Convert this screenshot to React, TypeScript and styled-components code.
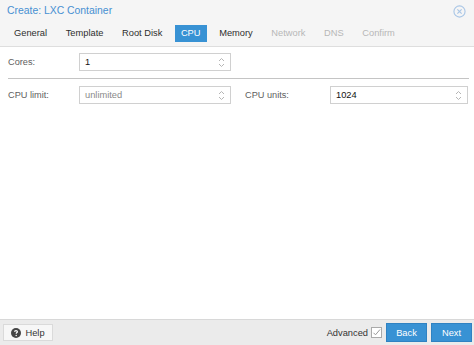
import React from 'react'
import styled, { createGlobalStyle } from 'styled-components'

const tabs = [
  { label: 'General', state: 'normal' },
  { label: 'Template', state: 'normal' },
  { label: 'Root Disk', state: 'normal' },
  { label: 'CPU', state: 'active' },
  { label: 'Memory', state: 'normal' },
  { label: 'Network', state: 'disabled' },
  { label: 'DNS', state: 'disabled' },
  { label: 'Confirm', state: 'disabled' },
] as const

type TabState = 'normal' | 'active' | 'disabled'

const Spinner = () => (
  <svg width="7" height="11" viewBox="0 0 7 11">
    <path d="M1 4 L3.5 1.5 L6 4 M1 7 L3.5 9.5 L6 7" fill="none" stroke="#b5b5b5" strokeWidth="1" />
  </svg>
)

const App = (): React.ReactElement => {
  return (
    <Window>
      <GlobalStyle />
      <Header>
        <Title>Create: LXC Container</Title>
        <CloseIcon width="13" height="13" viewBox="0 0 14 14">
          <circle cx="7" cy="7" r="6" fill="none" stroke="#a9c6e6" strokeWidth="1.2" />
          <path d="M4.7 4.7 L9.3 9.3 M9.3 4.7 L4.7 9.3" stroke="#a9c6e6" strokeWidth="1.2" />
        </CloseIcon>
      </Header>

      <TabBar>
        {tabs.map((t) => (
          <Tab key={t.label} $state={t.state}>
            {t.label}
          </Tab>
        ))}
      </TabBar>

      <Body>
        <Row>
          <Field>
            <Label>Cores:</Label>
            <Input $width={152}>
              <Value>1</Value>
              <Spinner />
            </Input>
          </Field>
        </Row>

        <Divider />

        <Row>
          <Field>
            <Label>CPU limit:</Label>
            <Input $width={152}>
              <Value $muted>unlimited</Value>
              <Spinner />
            </Input>
          </Field>
          <Field>
            <Label $width={85}>CPU units:</Label>
            <Input $width={138}>
              <Value>1024</Value>
              <Spinner />
            </Input>
          </Field>
        </Row>
      </Body>

      <Footer>
        <HelpButton>
          <HelpIcon width="10" height="10" viewBox="0 0 12 12">
            <circle cx="6" cy="6" r="6" fill="#454545" />
            <path d="M4.3 4.6 C4.3 3.5 5 3 6 3 C7 3 7.7 3.6 7.7 4.4 C7.7 5.5 6.3 5.5 6.3 6.8" fill="none" stroke="#fff" strokeWidth="1.5" />
            <circle cx="6.2" cy="9" r="0.9" fill="#fff" />
          </HelpIcon>
          Help
        </HelpButton>
        <Spacer />
        <AdvancedLabel>Advanced</AdvancedLabel>
        <CheckBox width="11" height="11" viewBox="0 0 11 11">
          <rect x="0.5" y="0.5" width="10" height="10" fill="#fff" stroke="#aaa" />
          <path d="M2.5 5.8 L4.5 7.8 L9 2.5" fill="none" stroke="#9a9a9a" strokeWidth="1" />
        </CheckBox>
        <PrimaryButton>Back</PrimaryButton>
        <PrimaryButton>Next</PrimaryButton>
      </Footer>
    </Window>
  )
}

const GlobalStyle = createGlobalStyle`
  html, body {
    margin: 0;
    padding: 0;
    background: #fff;
  }
  body {
    font-family: "Liberation Sans", Arial, sans-serif;
    font-size: 9.3px;
    color: #333;
  }
`

const Window = styled.div`
  width: 474px;
  height: 345px;
  display: flex;
  flex-direction: column;
  background: #fff;
  overflow: hidden;
`

const Header = styled.div`
  height: 20px;
  display: flex;
  align-items: center;
  justify-content: space-between;
  padding: 0 8px 0 7px;
  background: #f5f5f5;
`

const Title = styled.div`
  color: #4790d2;
  font-size: 10.4px;
  margin-top: 1px;
`

const CloseIcon = styled.svg`
  display: block;
  margin-top: 3px;
`

const TabBar = styled.div`
  height: 26px;
  display: flex;
  align-items: center;
  gap: 6.6px;
  padding: 0 8px;
  background: #f5f5f5;
  border-bottom: 1px solid #dedede;
`

const Tab = styled.div<{ $state: TabState }>`
  flex-shrink: 0;
  white-space: nowrap;
  padding: 4px 6px;
  font-size: 9.3px;
  line-height: 9px;
  color: ${(p) => (p.$state === 'active' ? '#fff' : p.$state === 'disabled' ? '#b7b7b7' : '#2e2e2e')};
  background: ${(p) => (p.$state === 'active' ? '#3892d4' : 'transparent')};
`

const Body = styled.div`
  flex: 1;
  padding: 6px 6px 0 8px;
  display: flex;
  flex-direction: column;
`

const Row = styled.div`
  display: flex;
  align-items: center;
  gap: 14px;
`

const Field = styled.div`
  display: flex;
  align-items: center;
`

const Label = styled.div<{ $width?: number }>`
  width: ${(p) => p.$width ?? 71}px;
  color: #5e5e5e;
  font-size: 9.2px;
  white-space: nowrap;
`

const Input = styled.div<{ $width: number }>`
  box-sizing: border-box;
  width: ${(p) => p.$width}px;
  height: 18px;
  display: flex;
  align-items: center;
  justify-content: space-between;
  padding: 0 5px 0 5px;
  border: 1px solid #d0d0d0;
  background: #fff;
`

const Value = styled.span<{ $muted?: boolean }>`
  color: ${(p) => (p.$muted ? '#8a8a8a' : '#111')};
  font-size: 9.3px;
`

const Divider = styled.hr`
  border: none;
  border-top: 1px solid #c4c4c4;
  margin: 7px 0 7px 0;
  width: 461px;
`

const Footer = styled.div`
  height: 25px;
  display: flex;
  align-items: center;
  gap: 4px;
  padding: 0 2px 0 3px;
  background: #ebebeb;
  border-top: 1px solid #d8d8d8;
`

const HelpButton = styled.div`
  box-sizing: border-box;
  width: 50px;
  height: 17px;
  display: flex;
  align-items: center;
  justify-content: center;
  gap: 4px;
  background: #f7f7f7;
  border: 1px solid #dadada;
  color: #333;
  font-size: 9.3px;
`

const HelpIcon = styled.svg`
  display: block;
`

const Spacer = styled.div`
  flex: 1;
`

const AdvancedLabel = styled.span`
  color: #333;
  font-size: 9.3px;
  margin-right: -1px;
`

const CheckBox = styled.svg`
  display: block;
`

const PrimaryButton = styled.div`
  box-sizing: border-box;
  width: 41px;
  height: 19px;
  display: flex;
  align-items: center;
  justify-content: center;
  background: #3892d4;
  border: 1px solid #2f82c2;
  color: #fff;
  font-size: 9.3px;
`

export default App
